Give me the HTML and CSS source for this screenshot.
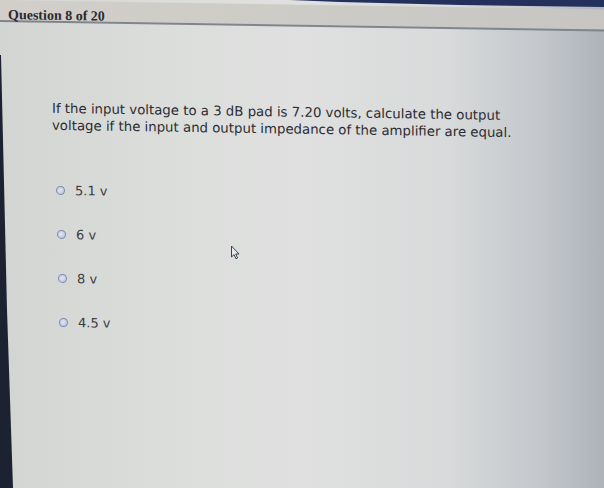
FILE: index.html
```html
<!DOCTYPE html>
<html>
<head>
<meta charset="utf-8">
<link rel="stylesheet" href="styles.css">
</head>
<body>
<div class="screen">
  <header class="qbar"><span class="qtitle">Question 8 of 20</span></header>
  <main class="content">
    <p class="prompt">If the input voltage to a 3 dB pad is 7.20 volts, calculate the output<br>voltage if the input and output impedance of the amplifier are equal.</p>
    <ul class="options">
      <li class="option"><span class="radio"></span><span class="label">5.1 v</span></li>
      <li class="option"><span class="radio"></span><span class="label">6 v</span></li>
      <li class="option"><span class="radio"></span><span class="label">8 v</span></li>
      <li class="option"><span class="radio"></span><span class="label">4.5 v</span></li>
    </ul>
  </main>
</div>
<svg class="bezel-top" width="604" height="8" viewBox="0 0 604 8"><polygon points="290,0 604,0 604,7 460,5 340,2" fill="#23305c"/></svg>
<svg class="bezel-left" width="16" height="488" viewBox="0 0 16 488"><polygon points="0,55 1,55 7,310 13,488 0,488" fill="#1d2232"/></svg>
<svg class="cursor" width="11" height="15" viewBox="0 0 11 15"><path d="M1.5 1 L1.5 12 L4 9.6 L6 13.8 L7.6 13 L5.7 9 L9 9 Z" fill="#e8eaee" stroke="#3b4150" stroke-width="1" stroke-linejoin="round"/></svg>
</body>
</html>
```
FILE: styles.css
```css
html, body {
  margin: 0;
  padding: 0;
}
body {
  width: 604px;
  height: 488px;
  overflow: hidden;
  position: relative;
  background: linear-gradient(to right, #d3d5d3 0%, #dcdedc 30%, #dfe0df 50%, #d8dadb 74%, #c3c7cb 90%, #aeb3ba 100%);
  font-family: "DejaVu Sans", Verdana, sans-serif;
}
.screen {
  width: 620px;
  transform: skewY(0.9deg);
  transform-origin: 0 0;
}
.qbar {
  height: 22px;
  box-sizing: border-box;
  padding: 7px 0 0 8px;
  background: linear-gradient(to right, #d2cfca 0%, #cdcbc6 50%, #c6c5c2 100%);
  border-bottom: 2px solid #80848c;
}
.qtitle {
  display: block;
  font-family: "Liberation Serif", "Times New Roman", serif;
  font-weight: bold;
  font-size: 14px;
  line-height: 15px;
  color: #2a2a2e;
}
.content {
  padding-left: 52px;
}
.prompt {
  margin: 78px 0 0 0;
  font-size: 13.3px;
  line-height: 16.5px;
  color: #2b2d31;
}
.options {
  list-style: none;
  margin: 49px 0 0 4px;
  padding: 0;
  display: flex;
  flex-direction: column;
  gap: 28px;
}
.option {
  display: flex;
  align-items: center;
  gap: 10px;
  font-size: 13px;
  line-height: 16px;
  color: #3a3c40;
}
.option:nth-child(2) { margin-left: 1px; }
.option:nth-child(3) { margin-left: 2px; }
.option:nth-child(4) { margin-left: 3px; }
.radio {
  width: 7px;
  height: 7px;
  border-radius: 50%;
  border: 1.5px solid #7c8bb4;
  background: radial-gradient(circle at 45% 45%, #e3e7f1 0%, #b3bdd6 100%);
  margin-top: -2px;
}
.bezel-top {
  position: absolute;
  left: 0;
  top: 0;
}
.bezel-left {
  position: absolute;
  left: 0;
  top: 0;
}
.cursor {
  position: absolute;
  left: 230px;
  top: 245px;
}
```
